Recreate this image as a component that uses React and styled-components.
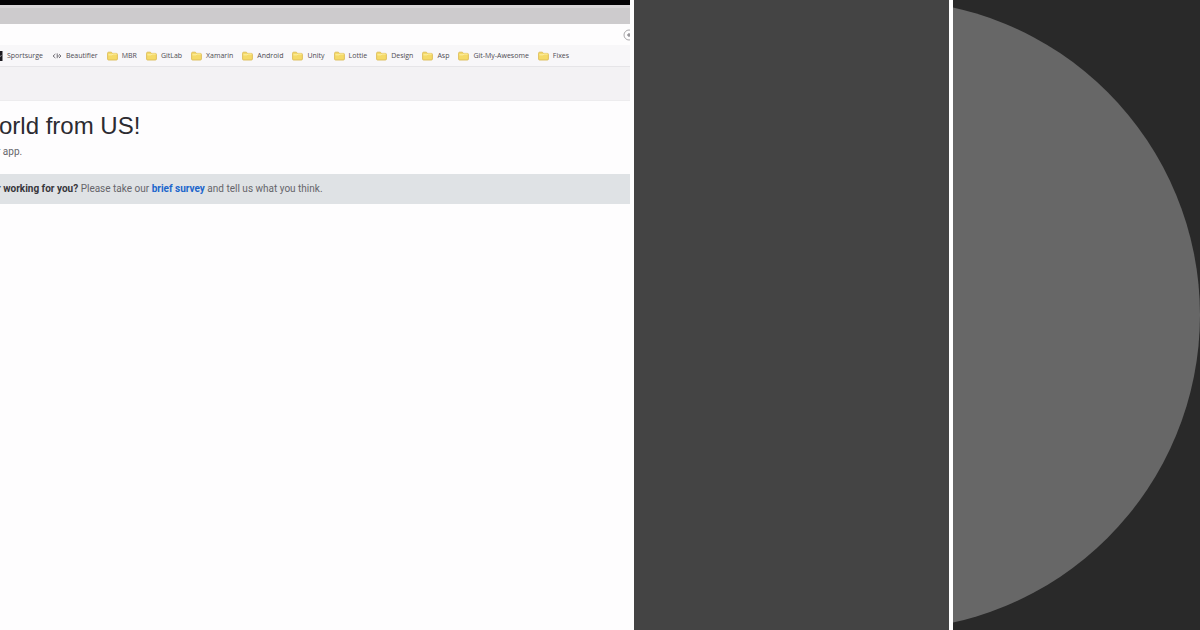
import styled, { createGlobalStyle } from "styled-components";

const bookmarks = [
  { label: "Sportsurge", icon: "site" },
  { label: "Beautifier", icon: "brackets" },
  { label: "MBR" },
  { label: "GitLab" },
  { label: "Xamarin" },
  { label: "Android" },
  { label: "Unity" },
  { label: "Lottie" },
  { label: "Design" },
  { label: "Asp" },
  { label: "Git-My-Awesome" },
  { label: "Fixes" },
];

const FolderIcon = () => (
  <svg width="11" height="10" viewBox="0 0 11 10" aria-hidden="true">
    <path
      d="M0.6 2.2Q0.6 1.2 1.6 1.2H4.4L5.5 2.4H9.4Q10.4 2.4 10.4 3.4V8Q10.4 9 9.4 9H1.6Q0.6 9 0.6 8Z"
      fill="#f5da68"
      stroke="#dcbb55"
      strokeWidth="0.9"
    />
    <path d="M1.4 3.8H5L6 3H9.6" fill="none" stroke="#fdf0a8" />
  </svg>
);

const SiteIcon = () => (
  <svg width="3" height="10" viewBox="0 0 3 10" aria-hidden="true">
    <path d="M0 0H2.5V10H0Z" fill="#1c1a20" />
    <path d="M0 5.5L1.6 4.5" stroke="#b9b7bd" strokeWidth="0.8" />
  </svg>
);

const BracketsIcon = () => (
  <svg width="10" height="8" viewBox="0 0 10 8" aria-hidden="true">
    <path
      d="M3.4 2L1 4L3.4 6M5.2 1.4V6.2M5.2 4H7.4M7 2.2L9 4L7 6"
      fill="none"
      stroke="#77757c"
      strokeWidth="1"
    />
  </svg>
);

const BookmarkIcon = ({ icon }) => {
  if (icon === "site") return <SiteIcon />;
  if (icon === "brackets") return <BracketsIcon />;
  return <FolderIcon />;
};

const App = () => {
  return (
    <>
      <GlobalStyle />
      <Layout>
        <Browser>
          <ScreenEdge />
          <TabStrip />
          <AddressBar>
            <AddButton type="button" aria-label="Add">
              <svg width="7" height="12" viewBox="0 0 7 12">
                <circle
                  cx="6"
                  cy="6"
                  r="5"
                  fill="none"
                  stroke="#a09ea2"
                  strokeWidth="0.9"
                />
                <path d="M4 6H7M6 4V8" stroke="#77757a" />
              </svg>
            </AddButton>
          </AddressBar>
          <BookmarksBar>
            {bookmarks.map(({ label, icon }) => (
              <Bookmark key={label} href="#">
                <BookmarkIcon icon={icon} />
                {label}
              </Bookmark>
            ))}
          </BookmarksBar>
          <PageHeader />
          <Content>
            <Title>orld from US!</Title>
            <Intro>r app.</Intro>
          </Content>
          <Survey>
            <strong>r working for you?</strong> Please take our{" "}
            <SurveyLink href="#">brief survey</SurveyLink> and tell us what you
            think.
          </Survey>
        </Browser>
        <Panel />
        <CirclePanel>
          <Circle viewBox="0 0 247 630" preserveAspectRatio="xMaxYMid slice">
            <circle cx="-68" cy="315" r="315" fill="#676767" />
          </Circle>
        </CirclePanel>
      </Layout>
    </>
  );
};

const GlobalStyle = createGlobalStyle`
  body {
    margin: 0;
    background: #fff;
  }
`;

const Layout = styled.div`
  display: grid;
  grid-template-columns: 630fr 315fr 247fr;
  gap: 4px;
  min-height: 100vh;
`;

const Browser = styled.main`
  display: flex;
  flex-direction: column;
  min-width: 0;
  overflow: hidden;
  background: #fefdfe;
  color: #66656a;
  font-family: Roboto, "Liberation Sans", sans-serif;
`;

const ScreenEdge = styled.div`
  height: 5px;
  background: #030204;
`;

const TabStrip = styled.div`
  height: 16px;
  border-top: 3px solid #d8d5d8;
  background: #cdcbcd;
`;

const AddressBar = styled.div`
  display: flex;
  align-items: flex-end;
  justify-content: flex-end;
  height: 17px;
  padding-bottom: 4px;
`;

const AddButton = styled.button`
  display: flex;
  padding: 0;
  border: 0;
  background: none;
`;

const BookmarksBar = styled.nav`
  display: flex;
  align-items: center;
  gap: 9px;
  height: 21px;
  border-bottom: 1px solid #e6e5e8;
  background: #f8f7f9;
`;

const Bookmark = styled.a`
  display: flex;
  align-items: center;
  gap: 4px;
  color: #4d4b52;
  font-family: "Open Sans", sans-serif;
  font-size: 7px;
  line-height: 10px;
  text-decoration: none;
  white-space: nowrap;
`;

const PageHeader = styled.div`
  height: 33px;
  border-bottom: 1px solid #edecee;
  background: #f3f2f4;
`;

const Content = styled.section`
  padding: 10px 0 15px;
`;

const Title = styled.h1`
  margin: 0 0 4px -1px;
  color: #2c2b31;
  font-family: "Liberation Sans", sans-serif;
  font-size: 24px;
  font-weight: 400;
  line-height: 30px;
`;

const Intro = styled.p`
  margin: 0 0 0 -3px;
  font-size: 10px;
  line-height: 14px;
`;

const Survey = styled.aside`
  padding: 8px 0;
  background: #dfe2e5;
  font-size: 10px;
  line-height: 14px;
  text-indent: -3px;

  strong {
    color: #37363b;
  }
`;

const SurveyLink = styled.a`
  color: #1c66cc;
  font-weight: 700;
  text-decoration: none;
`;

const Panel = styled.div`
  background: #444;
`;

const CirclePanel = styled.div`
  display: flex;
  background: #292929;
`;

const Circle = styled.svg`
  width: 100%;
  height: 100%;
`;

export default App;
